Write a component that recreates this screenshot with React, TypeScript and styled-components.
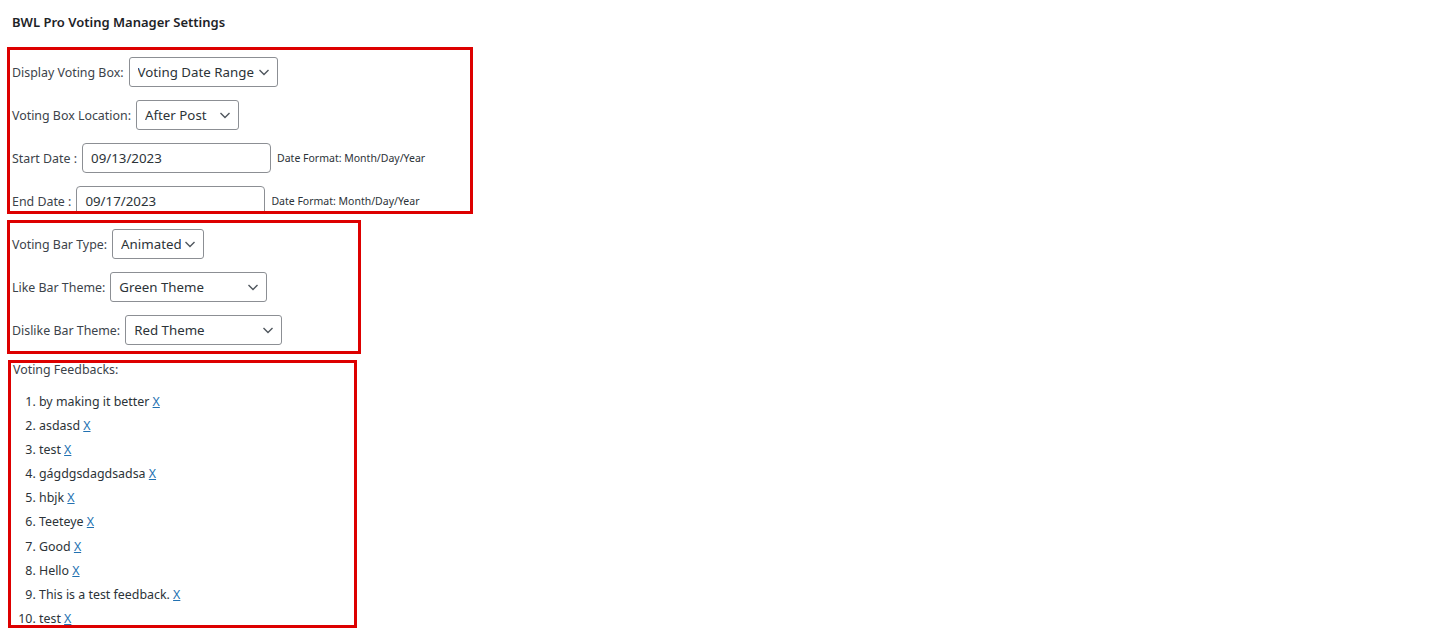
import React from "react";
import styled, { createGlobalStyle } from "styled-components";

const GlobalStyle = createGlobalStyle`
  body {
    margin: 0;
    background: #fff;
    font-family: "Noto Sans", "Open Sans", sans-serif;
    color: #3c434a;
  }
`;

const Page = styled.div`
  padding: 12px 0 0 7px;
`;

const Title = styled.h1`
  margin: 0 0 15px 5px;
  font-size: 13px;
  line-height: 20px;
  font-weight: 600;
  color: #1d2327;
`;

const Box = styled.div<{ $width: number; $height: number; $left?: number; $top?: number }>`
  box-sizing: border-box;
  width: ${(p) => p.$width}px;
  height: ${(p) => p.$height}px;
  margin: 0 0 6px ${(p) => p.$left || 0}px;
  border: 3px solid #dd0000;
  padding: ${(p) => (p.$top === undefined ? 7 : p.$top)}px 0 0 2px;
  overflow: hidden;
`;

const Row = styled.div`
  display: flex;
  align-items: center;
  height: 30px;
  margin-bottom: 13px;
`;

const Label = styled.label`
  font-size: 12.4px;
  margin-right: 5px;
  white-space: nowrap;
`;

const SelectWrap = styled.div<{ $width: number }>`
  position: relative;
  width: ${(p) => p.$width}px;
  height: 30px;
`;

const Select = styled.select`
  appearance: none;
  box-sizing: border-box;
  width: 100%;
  height: 30px;
  padding: 0 22px 0 8px;
  border: 1px solid #8c8f94;
  border-radius: 3px;
  background: #fff;
  font-family: "Noto Sans", "Open Sans", sans-serif;
  font-size: 13.3px;
  color: #2c3338;
`;

const Chevron = styled.svg`
  position: absolute;
  right: 8px;
  top: 9px;
  width: 12px;
  height: 12px;
  pointer-events: none;
`;

const DateInput = styled.input`
  box-sizing: border-box;
  width: 189px;
  height: 30px;
  padding: 0 8px;
  border: 1px solid #8c8f94;
  border-radius: 4px;
  font-family: "Noto Sans", "Open Sans", sans-serif;
  font-size: 13.3px;
  color: #2c3338;
`;

const Note = styled.span`
  margin-left: 6px;
  font-size: 10.5px;
  color: #2c3338;
`;

const ListTitle = styled.div`
  font-size: 12.4px;
  line-height: 13px;
  margin-top: -7px;
`;

const List = styled.ol`
  margin: 14px 0 0;
  padding-left: 26px;
  font-size: 12.4px;
  line-height: 24.1px;
  color: #2c3338;
`;

const RemoveLink = styled.a`
  color: #2271b1;
  text-decoration: underline;
`;

interface SelectProps {
  width: number;
  value: string;
}

const Dropdown: React.FC<SelectProps> = ({ width, value }) => (
  <SelectWrap $width={width}>
    <Select defaultValue={value}>
      <option>{value}</option>
    </Select>
    <Chevron viewBox="0 0 12 12">
      <path d="M1.5 4 L6 8.5 L10.5 4" fill="none" stroke="#50575e" strokeWidth="1.4" />
    </Chevron>
  </SelectWrap>
);

const feedbacks = [
  "by making it better",
  "asdasd",
  "test",
  "gágdgsdagdsadsa",
  "hbjk",
  "Teeteye",
  "Good",
  "Hello",
  "This is a test feedback.",
  "test",
];

const App: React.FC = () => {
  return (
    <Page>
      <GlobalStyle />
      <Title>BWL Pro Voting Manager Settings</Title>

      <Box $width={466} $height={167}>
        <Row>
          <Label>Display Voting Box:</Label>
          <Dropdown width={149} value="Voting Date Range" />
        </Row>
        <Row>
          <Label>Voting Box Location:</Label>
          <Dropdown width={103} value="After Post" />
        </Row>
        <Row>
          <Label>Start Date :</Label>
          <DateInput defaultValue="09/13/2023" />
          <Note>Date Format: Month/Day/Year</Note>
        </Row>
        <Row>
          <Label>End Date :</Label>
          <DateInput defaultValue="09/17/2023" />
          <Note>Date Format: Month/Day/Year</Note>
        </Row>
      </Box>

      <Box $width={354} $height={134} $top={6}>
        <Row>
          <Label>Voting Bar Type:</Label>
          <Dropdown width={92} value="Animated" />
        </Row>
        <Row>
          <Label>Like Bar Theme:</Label>
          <Dropdown width={157} value="Green Theme" />
        </Row>
        <Row>
          <Label>Dislike Bar Theme:</Label>
          <Dropdown width={157} value="Red Theme" />
        </Row>
      </Box>

      <Box $width={349} $height={268} $left={1}>
        <ListTitle>Voting Feedbacks:</ListTitle>
        <List>
          {feedbacks.map((f, i) => (
            <li key={i}>
              {f} <RemoveLink href="#">X</RemoveLink>
            </li>
          ))}
        </List>
      </Box>
    </Page>
  );
};

export default App;
